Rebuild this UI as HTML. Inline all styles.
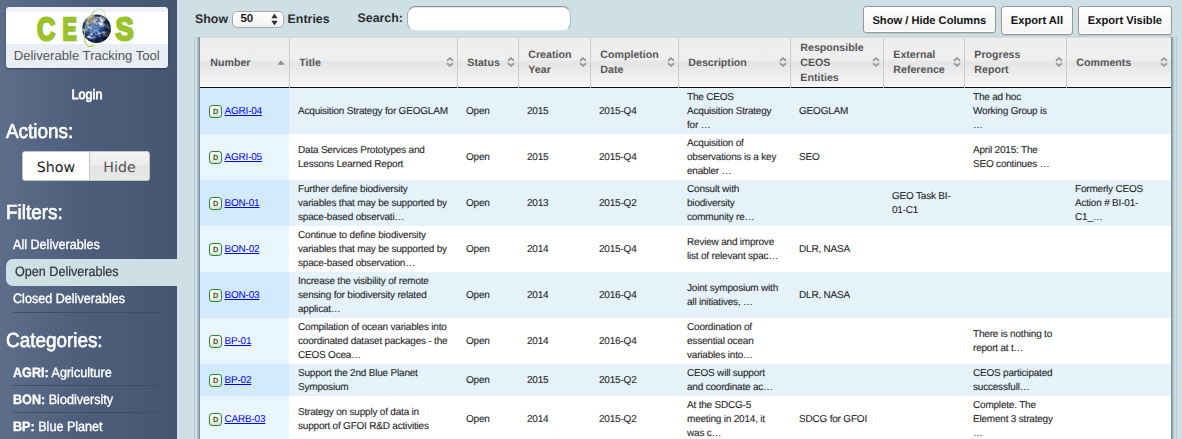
<!DOCTYPE html>
<html lang="en"><head><meta charset="utf-8"><title>CEOS Deliverable Tracking Tool</title>
<style>
*{box-sizing:border-box;margin:0;padding:0}
html,body{width:1182px;height:439px;overflow:hidden}
body{position:relative;text-rendering:geometricPrecision;background:#cee0e6;font-family:"Liberation Sans",sans-serif;font-size:9.6px;color:#222}
#side{position:absolute;left:0;top:0;width:177px;height:439px;background:linear-gradient(90deg,#5d6e8a 0%,#4c5d79 50%,#455670 100%);color:#fff}
#logo{position:absolute;left:6px;top:7px;width:161.5px;height:61px;border-radius:4px;background:#fff;overflow:hidden;box-shadow:0 1px 2px rgba(0,0,0,.35)}
#logo .top{position:absolute;left:0;top:0;width:100%;height:5px;background:#eef1f6}
#logo .bot{position:absolute;left:0;top:37px;width:100%;height:24px;background:#e9eef4}
#logo .sub{position:absolute;left:0;top:39.5px;width:100%;text-align:center;font-size:13.1px;line-height:18px;color:#555;white-space:nowrap}
#logo svg{position:absolute;left:0;top:0}
#login{position:absolute;left:0;top:86.3px;width:174px;text-align:center;font-size:12.6px;line-height:16px;color:#fff;-webkit-text-stroke:0.7px #fff;transform:scaleY(1.08);transform-origin:0 0}
.h2{position:absolute;left:6px;font-size:18.9px;line-height:24px;color:#fff;white-space:nowrap;-webkit-text-stroke:0.6px #fff;transform:scaleY(1.08);transform-origin:0 0}
#bset{position:absolute;left:22px;top:151px;width:128px;height:30px;border:1px solid #c4c4c4;border-radius:3px;overflow:hidden;background:#fff;font-family:"DejaVu Sans","Liberation Sans",sans-serif;font-size:14.2px}
#bset span{position:absolute;top:0;height:28px;line-height:32.6px;text-align:center}
#bset .a{left:0;width:67px;background:#fff;color:#212121;border-right:1px solid #c4c4c4}
#bset .b{left:67px;width:59px;background:linear-gradient(#f3f3f3 0%,#ececec 50%,#e4e4e4 51%,#e8e8e8 100%);color:#555}
.mi{position:absolute;left:13px;font-size:12.6px;line-height:16px;color:#fff;white-space:nowrap;-webkit-text-stroke:0.35px #fff;transform:scaleY(1.08);transform-origin:0 0}
.mi b{font-weight:bold}
#cur{position:absolute;left:6px;top:259px;width:171px;height:27px;background:#cee0e6;border-radius:7px 0 0 7px}
#cur span{position:absolute;left:9px;top:3.8px;font-size:12.6px;line-height:16px;color:#333;white-space:nowrap;-webkit-text-stroke:0.2px #333;transform:scaleY(1.08);transform-origin:0 0}
.sep{position:absolute;left:13px;width:147px;height:1px;background:#3e4c67}
#main{position:absolute;left:177px;top:0;width:1005px;height:439px}
.lbl{position:absolute;font-weight:bold;font-size:12.4px;line-height:16px;color:#2b2b2b;white-space:nowrap}
#l-show{left:18px;top:10.5px}
#sel{position:absolute;left:55.4px;top:10.6px;width:51.2px;height:17.4px;border:1px solid #a9a9a9;border-radius:5px;background:linear-gradient(#fff,#f1f1f1)}
#sel .v{position:absolute;left:7px;top:0.6px;font-size:11.5px;line-height:15.4px;font-weight:bold;color:#1c1c1c}
#sel .arr{position:absolute;right:4.6px;top:1.4px}
#l-ent{left:110.6px;top:10.5px}
#l-search{left:180.5px;top:9.5px}
#inp{position:absolute;left:230.3px;top:6px;width:164px;height:25px;border:1px solid;border-color:#8d9599 #b3bdc1 #dbe4e8 #a9b3b7;border-radius:8.5px;background:#fff;box-shadow:inset 0 1px 1px rgba(0,0,0,.12)}
.tb{position:absolute;top:6px;height:29px;border:1px solid #999;border-radius:3px;background:linear-gradient(#fff,#f3f3f3 90%,#fff);font-weight:bold;font-size:11.15px;line-height:29px;text-align:center;color:#111;white-space:nowrap;box-shadow:0 1px 1px rgba(0,0,0,.1)}
#b1{left:686px;width:132.7px;height:27.3px}
#b2{left:824.3px;width:71.3px}
#b3{left:901.2px;width:93.4px}
#tw{position:absolute;left:23px;top:37px;width:970.7px;height:410px;background:#fff}
#shl{position:absolute;left:17px;top:37px;width:6px;height:410px;background:linear-gradient(90deg,#b7c9cf 0,#b7c9cf 1px,#cbdde3 1px,#cbdde3 2.5px,#b4c6cd 3.5px,#98abb2 4.5px,#74878f 6px)}
#shr{position:absolute;left:993.7px;top:37px;width:6px;height:410px;background:linear-gradient(270deg,#b7c9cf 0,#b7c9cf 1px,#cbdde3 1px,#cbdde3 2.5px,#b4c6cd 3.5px,#98abb2 4.5px,#74878f 6px)}
#sht{position:absolute;left:23px;top:36px;width:970.7px;height:2px;background:linear-gradient(#c8d8dd 0,#c8d8dd 1px,#dadddf 1px,#dadddf 2px);z-index:2}
#dt{border-collapse:separate;border-spacing:0;table-layout:fixed;width:970.7px}
th{height:51px;padding:1px 0 0 0;text-align:left;vertical-align:middle;font-weight:bold;font-size:10.65px;line-height:15px;color:#555;background:linear-gradient(to top,#0a0a0a 0,#0a0a0a 1.2px,#fff 1.2px,#fff 2.2px,rgba(255,255,255,0) 2.2px),linear-gradient(#eeeeee 0%,#efefef 44%,#e5e5e5 50%,#f2f2f2 86%,#f4f4f4 100%);border-left:1px solid #cbcbcb}
th:first-child{border-left:0}
.hw{position:relative;padding:0 18px 0 9.3px}
.si{position:absolute;right:2.7px;top:50%;margin-top:-6.8px}
td{padding:2px 0 0 9px;vertical-align:middle;font-size:10px;letter-spacing:-0.2px;line-height:14.1px;color:#1f1f1f;-webkit-text-stroke:0.1px #1f1f1f;white-space:nowrap;overflow:hidden}
tr.odd td{background:#e5f2fa}
tr.even td{background:#fff}
tr.odd td.s1{background:#d3e9fd}
tr.even td.s1{background:#e9f5ff}
td a{color:#0000ee;text-decoration:underline;-webkit-text-stroke:0;position:relative;top:0.7px}
.di{display:inline-block;vertical-align:middle;width:13.1px;height:13.1px;margin:0 2.4px 0 0;border:1.5px solid #1b8a20;border-radius:3.2px;background:linear-gradient(#fff 0%,#f4f6f3 60%,#d9ded6 100%);font-weight:bold;font-size:7.4px;letter-spacing:0;line-height:11.4px;text-align:center;color:#4f6a2a;font-family:"Liberation Sans",sans-serif}
td.s1 a{vertical-align:middle}

</style></head>
<body>
<div id="side">
<div id="logo"><div class="top"></div><div class="bot"></div>
<svg width="162" height="61" viewBox="0 0 162 61">
<defs><radialGradient id="g1" cx="40%" cy="42%" r="66%"><stop offset="0" stop-color="#4a74b2"/><stop offset="0.5" stop-color="#1d4180"/><stop offset="0.85" stop-color="#0c1d49"/><stop offset="1" stop-color="#050b22"/></radialGradient>
<radialGradient id="g2" cx="38%" cy="45%" r="62%"><stop offset="0" stop-color="#000" stop-opacity="0"/><stop offset="0.6" stop-color="#000" stop-opacity="0"/><stop offset="1" stop-color="#020818" stop-opacity="0.85"/></radialGradient>
<clipPath id="gc"><circle cx="90.5" cy="21.7" r="14.3"/></clipPath>
<clipPath id="lh"><rect x="70" y="0" width="18.6" height="50"/></clipPath>
<filter id="cl" x="0" y="0" width="100%" height="100%"><feTurbulence type="fractalNoise" baseFrequency="0.16 0.2" numOctaves="3" seed="11"/><feColorMatrix type="matrix" values="0 0 0 0 1  0 0 0 0 1  0 0 0 0 1  3.2 0 0 0 -1.35"/></filter>
<filter id="bl" x="-20%" y="-20%" width="140%" height="140%"><feGaussianBlur stdDeviation="0.9"/></filter></defs>
<g font-family="Liberation Sans, sans-serif" font-weight="bold" font-size="32" fill="#9ac32b" stroke="#9ac32b" stroke-width="2.4" stroke-linejoin="miter">
<text transform="translate(30.9 33) scale(0.79 1)" x="0" y="0">C</text>
<text transform="translate(56.5 33) scale(0.67 1)" x="0" y="0">E</text>
<text transform="translate(109.5 33) scale(0.85 1)" x="0" y="0">S</text>
</g>
<ellipse cx="88.9" cy="20.75" rx="9.3" ry="19.6" fill="none" stroke="#a5cb3c" stroke-width="0.8" opacity="0.55" transform="rotate(17.7 88.9 20.75)"/>
<circle cx="90.5" cy="21.7" r="14.3" fill="url(#g1)"/>
<g clip-path="url(#gc)">
<path d="M79 13 q3 -4 8 -4.500 q4 0.500 5 3 q-1 3 -4 3.500 q-1 3 -4 3 q-3 -1 -5 -5z" fill="#b89c7c" opacity=".75" filter="url(#bl)"/>
<rect x="76" y="7" width="29" height="29" filter="url(#cl)" opacity=".9"/>
<circle cx="90.5" cy="21.7" r="14.3" fill="url(#g2)"/>
</g>
<g clip-path="url(#lh)"><ellipse cx="88.9" cy="20.75" rx="9.3" ry="19.6" fill="none" stroke="#a5cb3c" stroke-width="0.9" transform="rotate(17.7 88.9 20.75)"/></g>
</svg>
<div class="sub">Deliverable Tracking Tool</div></div>
<div id="login">Login</div>
<div class="h2" style="top:119.5px">Actions:</div>
<div id="bset"><span class="a">Show</span><span class="b">Hide</span></div>
<div class="h2" style="top:200.5px">Filters:</div>
<div class="mi" style="top:236px">All Deliverables</div>
<div id="cur"><span>Open Deliverables</span></div>
<div class="mi" style="top:290px">Closed Deliverables</div>
<div class="sep" style="top:312px"></div>
<div class="h2" style="top:328.5px">Categories:</div>
<div class="mi" style="top:363.5px"><b>AGRI:</b> Agriculture</div>
<div class="sep" style="top:385px"></div>
<div class="mi" style="top:390.5px"><b>BON:</b> Biodiversity</div>
<div class="sep" style="top:412px"></div>
<div class="mi" style="top:417.7px"><b>BP:</b> Blue Planet</div>
</div>
<div id="main">
<div id="len"><span class="lbl" id="l-show">Show</span><span id="sel"><span class="v">50</span><svg class="arr" width="7" height="13" viewBox="0 0 7 13"><path d="M3.5 0.6 L6.6 5.2 H0.4 Z M3.5 12.4 L6.6 7.8 H0.4 Z" fill="#2e2e2e"/></svg></span><span class="lbl" id="l-ent">Entries</span></div>
<div id="flt"><span class="lbl" id="l-search">Search:</span><span id="inp"></span></div>
<div id="btns"><a class="tb" id="b1">Show / Hide Columns</a><a class="tb" id="b2">Export All</a><a class="tb" id="b3">Export Visible</a></div>
<div id="shl"></div><div id="shr"></div><div id="sht"></div><div id="tw"><table id="dt"><colgroup><col style="width:89.0px"><col style="width:168.0px"><col style="width:61.0px"><col style="width:72.0px"><col style="width:88.0px"><col style="width:112.0px"><col style="width:93.0px"><col style="width:81.0px"><col style="width:102.0px"><col style="width:104.7px"></colgroup>
<thead><tr><th><div class="hw" style="padding-left:10.3px"><span class="ht">Number</span><svg class="si" width="8" height="12" viewBox="0 0 8 12"><path d="M4 4.6 L7.7 8.7 H0.3 Z" fill="#8a8a8a" transform="translate(-1 0)"/></svg></div></th><th><div class="hw"><span class="ht">Title</span><svg class="si" width="8" height="12" viewBox="0 0 8 12"><path d="M1 4.7 L4 2.1 L7 4.7 M1 7.3 L4 9.9 L7 7.3" fill="none" stroke="#979797" stroke-width="1.85"/></svg></div></th><th><div class="hw"><span class="ht">Status</span><svg class="si" width="8" height="12" viewBox="0 0 8 12"><path d="M1 4.7 L4 2.1 L7 4.7 M1 7.3 L4 9.9 L7 7.3" fill="none" stroke="#979797" stroke-width="1.85"/></svg></div></th><th><div class="hw"><span class="ht">Creation<br>Year</span><svg class="si" width="8" height="12" viewBox="0 0 8 12"><path d="M1 4.7 L4 2.1 L7 4.7 M1 7.3 L4 9.9 L7 7.3" fill="none" stroke="#979797" stroke-width="1.85"/></svg></div></th><th><div class="hw"><span class="ht">Completion<br>Date</span><svg class="si" width="8" height="12" viewBox="0 0 8 12"><path d="M1 4.7 L4 2.1 L7 4.7 M1 7.3 L4 9.9 L7 7.3" fill="none" stroke="#979797" stroke-width="1.85"/></svg></div></th><th><div class="hw"><span class="ht">Description</span><svg class="si" width="8" height="12" viewBox="0 0 8 12"><path d="M1 4.7 L4 2.1 L7 4.7 M1 7.3 L4 9.9 L7 7.3" fill="none" stroke="#979797" stroke-width="1.85"/></svg></div></th><th><div class="hw"><span class="ht">Responsible<br>CEOS<br>Entities</span><svg class="si" width="8" height="12" viewBox="0 0 8 12"><path d="M1 4.7 L4 2.1 L7 4.7 M1 7.3 L4 9.9 L7 7.3" fill="none" stroke="#979797" stroke-width="1.85"/></svg></div></th><th><div class="hw"><span class="ht">External<br>Reference</span><svg class="si" width="8" height="12" viewBox="0 0 8 12"><path d="M1 4.7 L4 2.1 L7 4.7 M1 7.3 L4 9.9 L7 7.3" fill="none" stroke="#979797" stroke-width="1.85"/></svg></div></th><th><div class="hw"><span class="ht">Progress<br>Report</span><svg class="si" width="8" height="12" viewBox="0 0 8 12"><path d="M1 4.7 L4 2.1 L7 4.7 M1 7.3 L4 9.9 L7 7.3" fill="none" stroke="#979797" stroke-width="1.85"/></svg></div></th><th><div class="hw"><span class="ht">Comments</span><svg class="si" style="right:2.5px" width="8" height="12" viewBox="0 0 8 12"><path d="M1 4.7 L4 2.1 L7 4.7 M1 7.3 L4 9.9 L7 7.3" fill="none" stroke="#979797" stroke-width="1.85"/></svg></div></th></tr></thead>
<tbody>
<tr class="odd" style="height:46.0px"><td class="s1"><span class="di">D</span><a href="#">AGRI-04</a></td><td>Acquisition Strategy for GEOGLAM</td><td>Open</td><td>2015</td><td>2015-Q4</td><td>The CEOS<br>Acquisition Strategy<br>for …</td><td>GEOGLAM</td><td></td><td>The ad hoc<br>Working Group is<br>…</td><td></td></tr>
<tr class="even" style="height:46.0px"><td class="s1"><span class="di">D</span><a href="#">AGRI-05</a></td><td>Data Services Prototypes and<br>Lessons Learned Report</td><td>Open</td><td>2015</td><td>2015-Q4</td><td>Acquisition of<br>observations is a key<br>enabler …</td><td>SEO</td><td></td><td>April 2015: The<br>SEO continues …</td><td></td></tr>
<tr class="odd" style="height:46.0px"><td class="s1"><span class="di">D</span><a href="#">BON-01</a></td><td>Further define biodiversity<br>variables that may be supported by<br>space-based observati…</td><td>Open</td><td>2013</td><td>2015-Q2</td><td>Consult with<br>biodiversity<br>community re…</td><td></td><td>GEO Task BI-<br>01-C1</td><td></td><td>Formerly CEOS<br>Action # BI-01-<br>C1_…</td></tr>
<tr class="even" style="height:46.0px"><td class="s1"><span class="di">D</span><a href="#">BON-02</a></td><td>Continue to define biodiversity<br>variables that may be supported by<br>space-based observation…</td><td>Open</td><td>2014</td><td>2015-Q4</td><td>Review and improve<br>list of relevant spac…</td><td>DLR, NASA</td><td></td><td></td><td></td></tr>
<tr class="odd" style="height:46.0px"><td class="s1"><span class="di">D</span><a href="#">BON-03</a></td><td>Increase the visibility of remote<br>sensing for biodiversity related<br>applicat…</td><td>Open</td><td>2014</td><td>2016-Q4</td><td>Joint symposium with<br>all initiatives, …</td><td>DLR, NASA</td><td></td><td></td><td></td></tr>
<tr class="even" style="height:46.0px"><td class="s1"><span class="di">D</span><a href="#">BP-01</a></td><td>Compilation of ocean variables into<br>coordinated dataset packages - the<br>CEOS Ocea…</td><td>Open</td><td>2014</td><td>2016-Q4</td><td>Coordination of<br>essential ocean<br>variables into…</td><td></td><td></td><td>There is nothing to<br>report at t…</td><td></td></tr>
<tr class="odd" style="height:31.7px"><td class="s1"><span class="di">D</span><a href="#">BP-02</a></td><td>Support the 2nd Blue Planet<br>Symposium</td><td>Open</td><td>2015</td><td>2015-Q2</td><td>CEOS will support<br>and coordinate ac…</td><td></td><td></td><td>CEOS participated<br>successfull…</td><td></td></tr>
<tr class="even" style="height:46.0px"><td class="s1"><span class="di">D</span><a href="#">CARB-03</a></td><td>Strategy on supply of data in<br>support of GFOI R&amp;D activities</td><td>Open</td><td>2014</td><td>2015-Q2</td><td>At the SDCG-5<br>meeting in 2014, it<br>was c…</td><td>SDCG for GFOI</td><td></td><td>Complete. The<br>Element 3 strategy<br>…</td><td></td></tr>
</tbody></table></div>
</div>
</body></html>
